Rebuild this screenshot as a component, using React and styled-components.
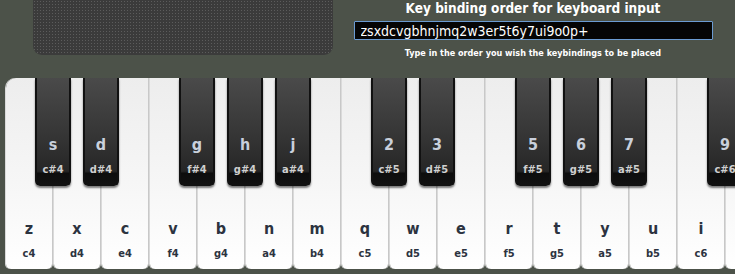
import styled, { createGlobalStyle } from "styled-components"

const GlobalStyle = createGlobalStyle`
    html, body {
        margin: 0;
        padding: 0;
        background: #4c5249;
        overflow: hidden;
    }
`

const keys = [
    { key: 'z', note: 'c4', black: { key: 's', note: 'c#4' } },
    { key: 'x', note: 'd4', black: { key: 'd', note: 'd#4' } },
    { key: 'c', note: 'e4' },
    { key: 'v', note: 'f4', black: { key: 'g', note: 'f#4' } },
    { key: 'b', note: 'g4', black: { key: 'h', note: 'g#4' } },
    { key: 'n', note: 'a4', black: { key: 'j', note: 'a#4' } },
    { key: 'm', note: 'b4' },
    { key: 'q', note: 'c5', black: { key: '2', note: 'c#5' } },
    { key: 'w', note: 'd5', black: { key: '3', note: 'd#5' } },
    { key: 'e', note: 'e5' },
    { key: 'r', note: 'f5', black: { key: '5', note: 'f#5' } },
    { key: 't', note: 'g5', black: { key: '6', note: 'g#5' } },
    { key: 'y', note: 'a5', black: { key: '7', note: 'a#5' } },
    { key: 'u', note: 'b5' },
    { key: 'i', note: 'c6', black: { key: '9', note: 'c#6' } },
    { key: 'o', note: 'd6', black: { key: '0', note: 'd#6' } },
]

const App = () => {
    return (
        <>
            <GlobalStyle />
            <Page>
                <Header>
                    <Speaker />
                    <Settings>
                        <Title>Key binding order for keyboard input</Title>
                        <BindingInput defaultValue="zsxdcvgbhnjmq2w3er5t6y7ui9o0p+" spellCheck={false} />
                        <Hint>Type in the order you wish the keybindings to be placed</Hint>
                    </Settings>
                </Header>
                <Piano>
                    {keys.map((k) => (
                        <WhiteKey key={k.note}>
                            <KeyLetter>{k.key}</KeyLetter>
                            <NoteName>{k.note}</NoteName>
                            {k.black && (
                                <BlackKey>
                                    <BlackLetter>{k.black.key}</BlackLetter>
                                    <BlackNote>{k.black.note}</BlackNote>
                                </BlackKey>
                            )}
                        </WhiteKey>
                    ))}
                </Piano>
            </Page>
        </>
    )
}

export default App

const Page = styled.div`
    width: 735px;
    height: 274px;
    display: flex;
    flex-direction: column;
    padding-left: 6px;
    box-sizing: border-box;
    font-family: 'DejaVu Sans Condensed', 'DejaVu Sans', sans-serif;
`

const Header = styled.div`
    display: flex;
    flex-direction: row;
    height: 78px;
`

const Speaker = styled.div`
    margin-left: 27px;
    width: 300px;
    height: 55px;
    border-radius: 0 0 9px 9px;
    background-color: #3b3b3b;
    background-image: radial-gradient(#5c5c5c 0.7px, transparent 1px);
    background-size: 3px 3px;
`

const Settings = styled.div`
    margin-left: 20px;
    width: 360px;
    display: flex;
    flex-direction: column;
    align-items: center;
`

const Title = styled.div`
    color: #fff;
    font-weight: bold;
    font-size: 13.5px;
    line-height: 17px;
    margin-top: 0px;
    white-space: nowrap;
`

const BindingInput = styled.input`
    margin-top: 4px;
    width: 359px;
    height: 19px;
    box-sizing: border-box;
    background: #050505;
    border: 1px solid #6b9bd2;
    border-radius: 1px;
    color: #fff;
    font-family: 'DejaVu Sans Condensed', 'DejaVu Sans', sans-serif;
    font-size: 14px;
    padding: 0 6px;
    outline: none;
`

const Hint = styled.div`
    margin-top: 8px;
    color: #fff;
    font-weight: bold;
    font-size: 9px;
    white-space: nowrap;
`

const Piano = styled.div`
    display: flex;
    flex-direction: row;
    height: 191px;
    border-top-left-radius: 10px;
`

const WhiteKey = styled.div`
    position: relative;
    flex: 0 0 46px;
    height: 100%;
    margin-right: 2px;
    border-radius: 0 0 5px 5px;
    background: linear-gradient(to bottom, #ededed 0%, #f7f7f7 60%, #fff 100%);
    box-shadow: 1px 0 0 #c8c8c8, -1px 0 0 #dadada;
    display: flex;
    flex-direction: column;
    align-items: center;
    color: #2c3340;
    font-weight: bold;

    &:first-child {
        border-top-left-radius: 10px;
    }
`

const KeyLetter = styled.div`
    margin-top: 141px;
    font-size: 16px;
    line-height: 20px;
`

const NoteName = styled.div`
    margin-top: 9px;
    font-size: 11px;
    line-height: 12px;
`

const BlackKey = styled.div`
    position: absolute;
    top: 0;
    right: -19px;
    width: 36px;
    height: 108px;
    box-sizing: border-box;
    z-index: 2;
    border: 2px solid #111;
    border-top: none;
    border-radius: 0 0 5px 5px;
    background: linear-gradient(to bottom, #4a4a4a 0%, #353535 55%, #262626 88%, #0d0d0d 90%, #111 100%);
    box-shadow: 0 2px 2px rgba(0, 0, 0, 0.5);
    display: flex;
    flex-direction: column;
    align-items: center;
`

const BlackLetter = styled.div`
    margin-top: 57px;
    font-size: 16px;
    line-height: 20px;
    color: #c9d0dc;
`

const BlackNote = styled.div`
    margin-top: 9px;
    font-size: 11px;
    line-height: 12px;
    color: #d0d0d0;
`
